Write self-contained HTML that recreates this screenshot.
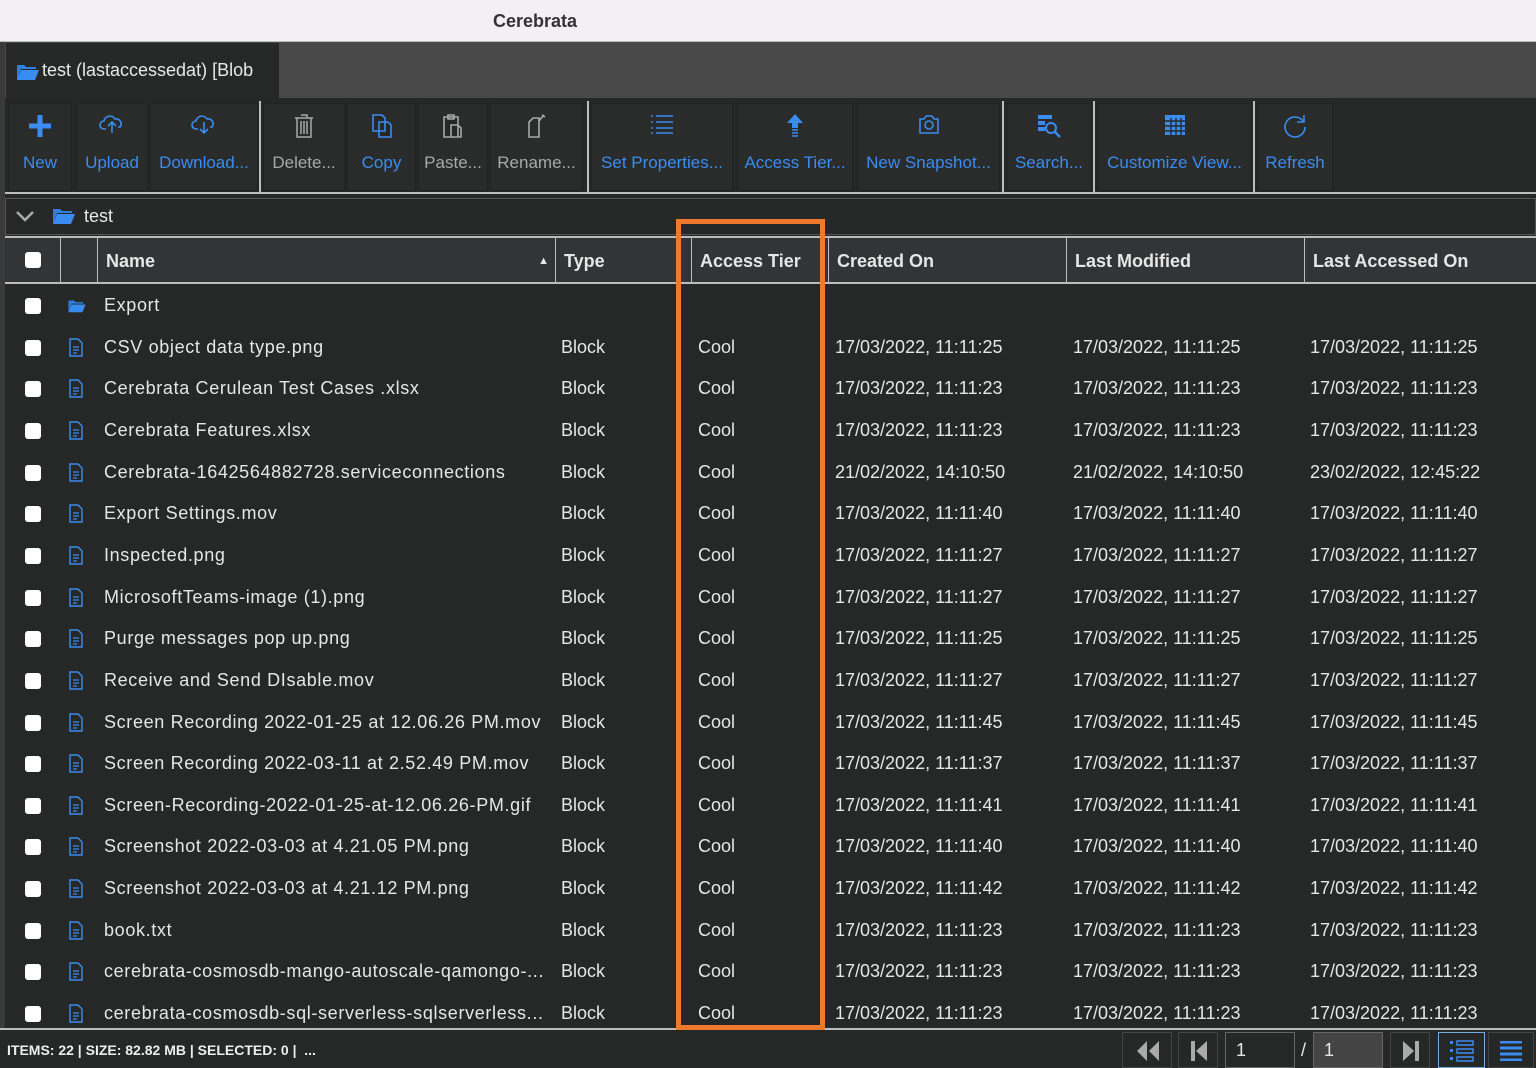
<!DOCTYPE html>
<html><head><meta charset="utf-8">
<style>
*{box-sizing:border-box;margin:0;padding:0}
body{width:1536px;height:1068px;overflow:hidden;background:#262828;font-family:"Liberation Sans",sans-serif;position:relative;color:#e8e8e8}
.abs{position:absolute}
.title{left:0;top:0;width:1536px;height:42px;background:#f4eff5;border-bottom:1px solid #bbb;text-align:center;line-height:42px;font-size:18px;font-weight:bold;color:#333}
.title span{position:relative;left:-233px}
.tabs{left:0;top:42px;width:1536px;height:56px;background:#484848}
.tab{left:6px;top:43px;height:55px;background:#262828;font-size:18px;line-height:55px;padding-left:36px;white-space:nowrap;overflow:hidden;width:273px}
.tb{top:103px;height:88px;background:#2a2c2c;border:1px solid #222;color:#3a8cf0;font-size:17px;text-align:center}
.tb .lb{position:absolute;left:0;right:0;top:49px;white-space:nowrap}
.tb svg{position:absolute;left:50%;top:9px;transform:translateX(-50%)}
.tb.g{color:#a8a8a8}
.sep{top:101px;width:2px;height:92px;background:#bdbdbd}
.hline{left:5px;width:1531px;height:2px;background:#bdbdbd}
.fbar{left:5px;top:198px;width:1531px;height:37px;background:#262828;border:1px solid #555;font-size:18px}
.hdr{left:5px;top:236px;width:1531px;height:48px;background:#333435;border-top:2px solid #bdbdbd;border-bottom:2px solid #bdbdbd}
.hc{position:absolute;top:0;height:46px;line-height:46px;font-size:18px;font-weight:bold;color:#e6e6e6;border-left:1px solid #bdbdbd;padding-left:8px}
.row{position:absolute;left:5px;width:1531px;height:41.65px;font-size:18px;color:#e6e6e6}
.row div{position:absolute;top:0;line-height:41.65px;white-space:nowrap}
.row div.nm{letter-spacing:0.65px}
.cb{position:absolute;left:20px;top:13px;width:16px;height:16px;background:#fff;border-radius:3px}
.status{left:0;top:1028px;width:1536px;height:40px;background:#262828;border-top:2px solid #bdbdbd}
.pb{top:1032px;height:36px;border:1px solid #444;background:#262828}
</style></head><body>
<div class="abs title"><span>Cerebrata</span></div>
<div class="abs tabs"></div>
<div class="abs" style="left:0;top:42px;width:5px;height:1026px;background:#3a3a3a"></div>
<div class="abs tab"><svg class="abs" style="left:10px;top:20px" width="24" height="18" viewBox="0 0 24 18"><path d="M1 2h7l2 2h10v2H5L1 17z" fill="#2f7fe0"/><path d="M5 7h18l-4 10H1z" fill="#3a8cf0"/></svg>test (lastaccessedat) [Blob</div>

<div class="abs tb" style="left:8px;width:64px"><svg width="26" height="26" viewBox="0 0 26 26"><path d="M13 2v22M2 13h22" stroke="#3a8cf0" stroke-width="5"/></svg><div class="lb">New</div></div>
<div class="abs tb" style="left:76px;width:72px"><svg width="26" height="22" viewBox="0 0 26 22"><path d="M7 16H5a4 4 0 010-8 6 6 0 0111-2 5 5 0 015 8h-2M13 9v11M9 13l4-4 4 4" stroke="#3a8cf0" stroke-width="1.6" fill="none"/></svg><div class="lb">Upload</div></div>
<div class="abs tb" style="left:150px;width:108px"><svg width="26" height="22" viewBox="0 0 26 22"><path d="M7 16H5a4 4 0 010-8 6 6 0 0111-2 5 5 0 015 8h-2M13 9v11M9 16l4 4 4-4" stroke="#3a8cf0" stroke-width="1.6" fill="none"/></svg><div class="lb">Download...</div></div>
<div class="abs sep" style="left:259px"></div>
<div class="abs tb g" style="left:263px;width:82px"><svg width="20" height="26" viewBox="0 0 20 26"><path d="M3 5h14v19H3zM1 5h18M7 2h6v3M7 8v13M10 8v13M13 8v13" stroke="#a8a8a8" stroke-width="1.5" fill="none"/></svg><div class="lb">Delete...</div></div>
<div class="abs tb" style="left:347px;width:69px"><svg width="22" height="26" viewBox="0 0 22 26"><path d="M2 2h9l3 3v13H2zM8 9h9l3 3v12H8z" stroke="#3a8cf0" stroke-width="1.6" fill="#262828"/></svg><div class="lb">Copy</div></div>
<div class="abs tb g" style="left:418px;width:70px"><svg width="22" height="26" viewBox="0 0 22 26"><path d="M2 4h14v20H2zM6 2h6v4H6zM9 12h7l3 3v9H9z" stroke="#a8a8a8" stroke-width="1.6" fill="#262828"/></svg><div class="lb">Paste...</div></div>
<div class="abs tb g" style="left:490px;width:93px"><svg width="22" height="26" viewBox="0 0 22 26"><path d="M3 9l4-4h6v19H3zM13 8l5-6M16 2l3 2" stroke="#a8a8a8" stroke-width="1.6" fill="none"/></svg><div class="lb">Rename...</div></div>
<div class="abs sep" style="left:587px"></div>
<div class="abs tb" style="left:591px;width:142px"><svg width="26" height="22" viewBox="0 0 26 22"><path d="M2 3h2M2 9h2M2 15h2M2 20h2M7 3h17M7 9h17M7 15h17M7 20h17" stroke="#3a8cf0" stroke-width="1.6"/></svg><div class="lb">Set Properties...</div></div>
<div class="abs tb" style="left:737px;width:116px"><svg width="20" height="26" viewBox="0 0 20 26"><path d="M10 1l8 9h-5v5H7v-5H2z" fill="#3a8cf0"/><path d="M7 17h6M7 20h6M7 23h6" stroke="#3a8cf0" stroke-width="1.5"/></svg><div class="lb">Access Tier...</div></div>
<div class="abs tb" style="left:857px;width:143px"><svg width="24" height="22" viewBox="0 0 24 22"><path d="M3 6h4l2-3h6l2 3h4v14H3z" stroke="#3a8cf0" stroke-width="1.6" fill="none"/><circle cx="12" cy="12" r="4" stroke="#3a8cf0" stroke-width="1.6" fill="none"/></svg><div class="lb">New Snapshot...</div></div>
<div class="abs sep" style="left:1002px"></div>
<div class="abs tb" style="left:1006px;width:86px"><svg width="26" height="26" viewBox="0 0 26 26"><path d="M2 2h14v4H2zM2 8h7v4H2zM2 14h7v4H2z" fill="#3a8cf0"/><circle cx="15" cy="15" r="5" stroke="#3a8cf0" stroke-width="2" fill="none"/><path d="M19 19l5 5" stroke="#3a8cf0" stroke-width="2.5"/></svg><div class="lb">Search...</div></div>
<div class="abs sep" style="left:1093px"></div>
<div class="abs tb" style="left:1097px;width:155px"><svg width="24" height="24" viewBox="0 0 24 24"><path d="M2 2h20v20H2z" fill="#3a8cf0"/><path d="M2 8h20M2 13h20M2 18h20M8 5v17M13 5v17M18 5v17" stroke="#262828" stroke-width="1.4"/></svg><div class="lb">Customize View...</div></div>
<div class="abs sep" style="left:1253px"></div>
<div class="abs tb" style="left:1257px;width:76px"><svg width="26" height="26" viewBox="0 0 26 26"><path d="M21 8a10 10 0 10 2 6M22 2v7h-7" stroke="#3a8cf0" stroke-width="1.6" fill="none"/></svg><div class="lb">Refresh</div></div>

<div class="abs hline" style="top:192px"></div>
<div class="abs fbar"><svg class="abs" style="left:10px;top:11px" width="18" height="12" viewBox="0 0 18 12"><path d="M1 2l8 8 8-8" stroke="#aaa" stroke-width="2.5" fill="none"/></svg><svg class="abs" style="left:46px;top:8px" width="24" height="18" viewBox="0 0 24 18"><path d="M1 2h7l2 2h10v2H5L1 17z" fill="#2f7fe0"/><path d="M5 7h18l-4 10H1z" fill="#3a8cf0"/></svg><span class="abs" style="left:78px;top:7px">test</span></div>

<div class="abs hdr">
<div class="cb" style="left:20px;top:14px"></div>
<div class="hc" style="left:55px;width:37px"></div>
<div class="hc" style="left:92px;width:458px">Name<span style="position:absolute;right:6px;top:0;font-size:11px">▲</span></div>
<div class="hc" style="left:550px;width:135px">Type</div>
<div class="hc" style="left:686px;width:137px">Access Tier</div>
<div class="hc" style="left:823px;width:238px">Created On</div>
<div class="hc" style="left:1061px;width:238px">Last Modified</div>
<div class="hc" style="left:1299px;width:232px">Last Accessed On</div>
</div>

<div id="rows"></div>
<div class="abs row" style="top:285px"><span class="cb"></span><svg class="abs" style="left:62px;top:14px" width="20" height="14" viewBox="0 0 24 18"><path d="M1 2h7l2 2h10v2H5L1 17z" fill="#2f7fe0"/><path d="M5 7h18l-4 10H1z" fill="#3a8cf0"/></svg><div class="nm" style="left:99px">Export</div></div>
<script>
var d=[["CSV object data type.png","17/03/2022, 11:11:25","17/03/2022, 11:11:25","17/03/2022, 11:11:25"],
["Cerebrata Cerulean Test Cases .xlsx","17/03/2022, 11:11:23","17/03/2022, 11:11:23","17/03/2022, 11:11:23"],
["Cerebrata Features.xlsx","17/03/2022, 11:11:23","17/03/2022, 11:11:23","17/03/2022, 11:11:23"],
["Cerebrata-1642564882728.serviceconnections","21/02/2022, 14:10:50","21/02/2022, 14:10:50","23/02/2022, 12:45:22"],
["Export Settings.mov","17/03/2022, 11:11:40","17/03/2022, 11:11:40","17/03/2022, 11:11:40"],
["Inspected.png","17/03/2022, 11:11:27","17/03/2022, 11:11:27","17/03/2022, 11:11:27"],
["MicrosoftTeams-image (1).png","17/03/2022, 11:11:27","17/03/2022, 11:11:27","17/03/2022, 11:11:27"],
["Purge messages pop up.png","17/03/2022, 11:11:25","17/03/2022, 11:11:25","17/03/2022, 11:11:25"],
["Receive and Send DIsable.mov","17/03/2022, 11:11:27","17/03/2022, 11:11:27","17/03/2022, 11:11:27"],
["Screen Recording 2022-01-25 at 12.06.26 PM.mov","17/03/2022, 11:11:45","17/03/2022, 11:11:45","17/03/2022, 11:11:45"],
["Screen Recording 2022-03-11 at 2.52.49 PM.mov","17/03/2022, 11:11:37","17/03/2022, 11:11:37","17/03/2022, 11:11:37"],
["Screen-Recording-2022-01-25-at-12.06.26-PM.gif","17/03/2022, 11:11:41","17/03/2022, 11:11:41","17/03/2022, 11:11:41"],
["Screenshot 2022-03-03 at 4.21.05 PM.png","17/03/2022, 11:11:40","17/03/2022, 11:11:40","17/03/2022, 11:11:40"],
["Screenshot 2022-03-03 at 4.21.12 PM.png","17/03/2022, 11:11:42","17/03/2022, 11:11:42","17/03/2022, 11:11:42"],
["book.txt","17/03/2022, 11:11:23","17/03/2022, 11:11:23","17/03/2022, 11:11:23"],
["cerebrata-cosmosdb-mango-autoscale-qamongo-...","17/03/2022, 11:11:23","17/03/2022, 11:11:23","17/03/2022, 11:11:23"],
["cerebrata-cosmosdb-sql-serverless-sqlserverless...","17/03/2022, 11:11:23","17/03/2022, 11:11:23","17/03/2022, 11:11:23"]];
var h="";
for(var i=0;i<d.length;i++){var t=285+(i+1)*41.65;
h+='<div class="row" style="top:'+t+'px"><span class="cb"></span><svg style="position:absolute;left:64px;top:11px" width="14" height="19" viewBox="0 0 14 19"><path d="M1 1h8l4 4v13H1z" stroke="#3a8cf0" stroke-width="1.4" fill="none"/><path d="M4 9h6M4 12h6M4 15h4" stroke="#3a8cf0" stroke-width="1.3"/></svg><div class="nm" style="left:99px">'+d[i][0]+'</div><div style="left:556px">Block</div><div style="left:693px">Cool</div><div style="left:830px">'+d[i][1]+'</div><div style="left:1068px">'+d[i][2]+'</div><div style="left:1305px">'+d[i][3]+'</div></div>';}
document.getElementById("rows").innerHTML=h;
</script>
<div class="abs status"><span class="abs" style="left:7px;top:12px;font-size:14px;font-weight:bold;color:#eee">ITEMS: 22 | SIZE: 82.82 MB | SELECTED: 0 |&nbsp; ...</span></div>
<div class="abs pb" style="left:1122px;width:50px"><svg class="abs" style="left:12px;top:8px" width="26" height="20" viewBox="0 0 26 20"><path d="M12 0L2 10l10 10zM24 0L14 10l10 10z" fill="#aaa"/></svg></div>
<div class="abs pb" style="left:1178px;width:40px"><svg class="abs" style="left:10px;top:8px" width="20" height="20" viewBox="0 0 20 20"><path d="M2 0h4v20H2zM18 0L7 10l11 10z" fill="#aaa"/></svg></div>
<div class="abs pb" style="left:1225px;width:70px;border-color:#666;font-size:18px;line-height:34px;padding-left:10px">1</div>
<div class="abs" style="left:1301px;top:1040px;font-size:18px">/</div>
<div class="abs pb" style="left:1313px;width:70px;border-color:#666;background:#444;font-size:18px;line-height:34px;padding-left:10px">1</div>
<div class="abs pb" style="left:1390px;width:40px"><svg class="abs" style="left:10px;top:8px" width="20" height="20" viewBox="0 0 20 20"><path d="M2 0l11 10L2 20zM14 0h4v20h-4z" fill="#aaa"/></svg></div>
<div class="abs pb" style="left:1438px;width:47px;border-color:#7aa8e0"><svg class="abs" style="left:10px;top:6px" width="26" height="24" viewBox="0 0 26 24"><path d="M1 2h3v3H1zM1 10h3v3H1zM1 18h3v3H1z" fill="#3a8cf0"/><path d="M8 2h16v4H8zM8 10h16v4H8zM8 18h16v4H8z" stroke="#3a8cf0" stroke-width="1.4" fill="none"/></svg></div>
<div class="abs pb" style="left:1488px;width:46px"><svg class="abs" style="left:10px;top:8px" width="24" height="20" viewBox="0 0 24 20"><path d="M1 1h22M1 7h22M1 13h22M1 19h22" stroke="#3a8cf0" stroke-width="3"/></svg></div>
<div class="abs" style="left:676px;top:219px;width:149px;height:811px;border:5px solid #ef7a2d"></div>
</body></html>
